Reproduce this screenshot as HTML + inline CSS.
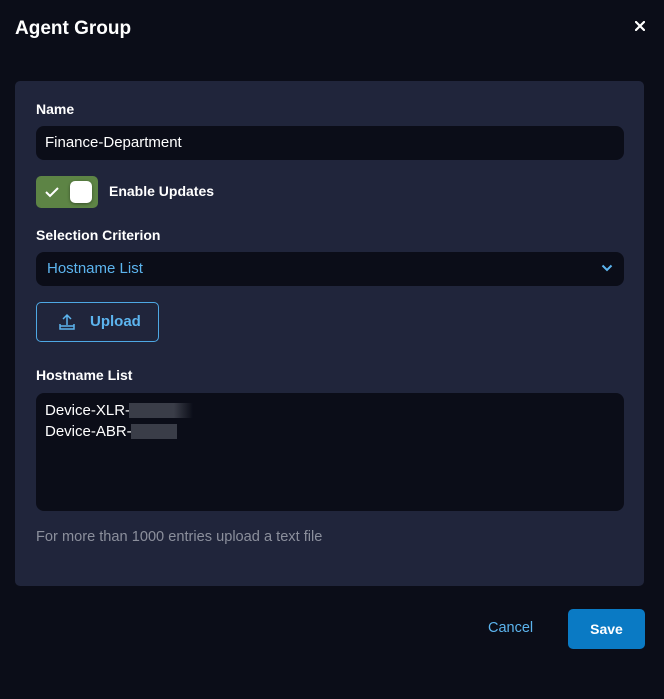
<!DOCTYPE html>
<html><head><style>
*{margin:0;padding:0;box-sizing:border-box}
body{width:664px;height:699px;background:#0b0d18;font-family:"Liberation Sans",sans-serif;color:#fff;position:relative;overflow:hidden}
.a{position:absolute}
.lbl{font-size:14px;font-weight:bold;color:#fff}
.inp{background:#0b0d18;border-radius:8px}
</style></head><body>
<div class="a" style="left:15px;top:18px;font-size:19px;font-weight:bold">Agent Group</div>
<svg class="a" style="left:635px;top:21px" width="10" height="10" viewBox="0 0 10 10"><path d="M1 1L9 9M9 1L1 9" stroke="#fff" stroke-width="2.2" stroke-linecap="round"/></svg>
<div class="a" style="left:15px;top:81px;width:629px;height:505px;background:#20253b;border-radius:5px"></div>
<div class="a lbl" style="left:36px;top:101px">Name</div>
<div class="a inp" style="left:36px;top:126px;width:588px;height:34px"></div>
<div class="a" style="left:45px;top:134px;font-size:15px">Finance-Department</div>
<div class="a" style="left:36px;top:176px;width:62px;height:32px;background:#5d8445;border-radius:5px"></div>
<svg class="a" style="left:44px;top:185px" width="16" height="14" viewBox="0 0 16 14"><path d="M2 7L6 11L14 3" stroke="#fff" stroke-width="2" fill="none"/></svg>
<div class="a" style="left:70px;top:181px;width:22px;height:22px;background:#fff;border-radius:5px;box-shadow:0 1px 3px rgba(0,0,0,.4)"></div>
<div class="a lbl" style="left:109px;top:183px">Enable Updates</div>
<div class="a lbl" style="left:36px;top:227px">Selection Criterion</div>
<div class="a inp" style="left:36px;top:252px;width:588px;height:34px"></div>
<div class="a" style="left:47px;top:260px;font-size:15px;color:#5cb4ee">Hostname List</div>
<svg class="a" style="left:601px;top:264px" width="12" height="8" viewBox="0 0 12 8"><path d="M1.5 1.5L6 6L10.5 1.5" stroke="#5cb4ee" stroke-width="2" fill="none"/></svg>
<div class="a" style="left:36px;top:302px;width:123px;height:40px;border:1px solid #4ea8e4;border-radius:5px"></div>
<svg class="a" style="left:57px;top:312px" width="20" height="20" viewBox="0 0 20 20"><path d="M10 13V3M6 7L10 3L14 7M3 12V17H17V12M3 14H17" stroke="#5cb4ee" stroke-width="1.5" fill="none"/></svg>
<div class="a" style="left:90px;top:313px;font-size:15px;font-weight:bold;color:#5cb4ee">Upload</div>
<div class="a lbl" style="left:36px;top:367px">Hostname List</div>
<div class="a inp" style="left:36px;top:393px;width:588px;height:118px"></div>
<div class="a" style="left:45px;top:400px;font-size:15px;line-height:21px">Device-XLR-<br>Device-ABR-</div>
<div class="a" style="left:129px;top:403px;width:64px;height:15px;background:linear-gradient(90deg,#3a3d48,#3a3d48 70%,#0b0d18)"></div>
<div class="a" style="left:131px;top:424px;width:46px;height:15px;background:#3a3d48"></div>
<div class="a" style="left:36px;top:529px;font-size:14.6px;color:#8b8f9c">For more than 1000 entries upload a text file</div>
<div class="a" style="left:488px;top:620px;font-size:14.5px;color:#5cb4ee">Cancel</div>
<div class="a" style="left:568px;top:609px;width:77px;height:40px;background:#0a7ac4;border-radius:5px;font-size:14px;font-weight:bold;text-align:center;line-height:40px">Save</div>
</body></html>
